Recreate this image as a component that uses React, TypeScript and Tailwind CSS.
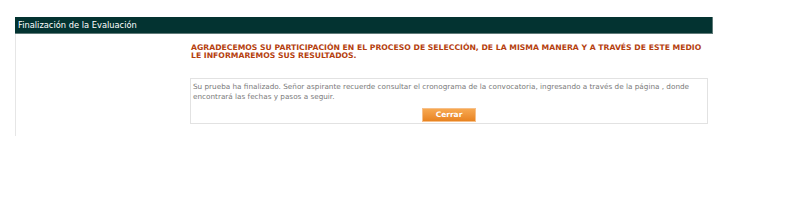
export default function App() {
  return (
    <div className="h-[200px] w-[800px] bg-white font-['DejaVu_Sans',Verdana,sans-serif]">
      <div className="pt-[17px] pl-[15px] w-[713px]">
        <div className="flex h-[17px] items-center border-r border-b border-[#5f7a78] bg-[#033331] pl-[3px] text-[8.3px] text-white">
          Finalización de la Evaluación
        </div>
        <div className="flex border-l border-[#e6e6e6] pb-[12px]">
          <div className="w-[174px] shrink-0" />
          <div className="flex-1 pr-[5px]">
            <p className="pt-[10px] pl-[1px] text-[7.7px] font-bold leading-[8px] whitespace-nowrap text-[#b5400e]">
              AGRADECEMOS SU PARTICIPACIÓN EN EL PROCESO DE SELECCIÓN, DE LA MISMA MANERA Y A TRAVÉS DE ESTE MEDIO
              <br />
              LE INFORMAREMOS SUS RESULTADOS.
            </p>
            <div className="mt-[18px] h-[46px] border border-[#e2e2e2] px-[2px] pt-[3px]">
              <p className="text-[7.25px] leading-[10px] text-[#7a7a7a]">
                Su prueba ha finalizado. Señor aspirante recuerde consultar el cronograma de la convocatoria, ingresando a través de la página , donde
                <br />
                encontrará las fechas y pasos a seguir.
              </p>
              <div className="mt-[6px] flex justify-center">
                <button
                  type="button"
                  className="h-[14px] w-[54px] border border-[#f7c08a] bg-gradient-to-b from-[#f7a850] to-[#e8831f] text-[7.5px] font-bold leading-none text-white"
                >
                  Cerrar
                </button>
              </div>
            </div>
          </div>
        </div>
      </div>
    </div>
  );
}
